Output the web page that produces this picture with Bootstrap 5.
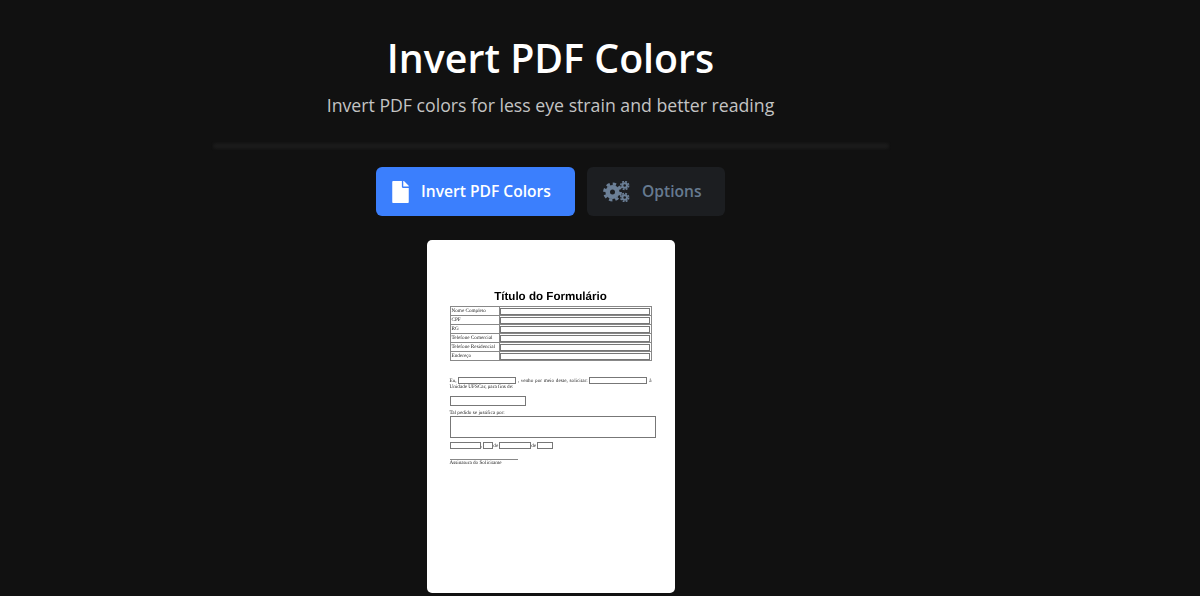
<!DOCTYPE html>
<html lang="en">

<head>
    <meta charset="UTF-8">
    <meta name="viewport" content="width=device-width, initial-scale=1.0">
    <title>Invert PDF Colors</title>
    <link href="https://cdn.jsdelivr.net/npm/bootstrap@5.3.0/dist/css/bootstrap.min.css" rel="stylesheet">
    <style>
        body {
            background-color: #111111;
            font-family: "Open Sans", "Noto Sans", sans-serif;
            height: 596px;
            overflow: hidden;
        }

        .tool-main {
            width: 1101px;
        }

        .tool-head {
            padding-top: 32px;
        }

        .tool-title {
            font-size: 39.3px;
            font-weight: 600;
            line-height: 52px;
            color: #fff;
            margin: 0;
        }

        .tool-sub {
            font-size: 17.7px;
            line-height: 25px;
            color: #c4c4c4;
            margin: 9px 0 0;
        }

        .tool-rule {
            width: 676px;
            height: 6px;
            margin: 25px auto 18px;
            background: #1a1a1a;
            border-radius: 3px;
            filter: blur(1px);
        }

        .act-btn {
            height: 49px;
            border: 0;
            border-radius: 6px;
            font-size: 15.6px;
            font-weight: 600;
            display: flex;
            align-items: center;
            padding: 0;
        }

        .act-blue {
            width: 199px;
            padding-left: 16px;
            gap: 12px;
            background: #3b7ffd;
            color: #fff;
        }

        .act-blue:hover {
            background: #3b7ffd;
            color: #fff;
        }

        .act-dark {
            width: 138px;
            padding-left: 16px;
            gap: 12px;
            background: #1c1e21;
            color: #667a90;
        }

        .act-dark:hover {
            background: #1c1e21;
            color: #667a90;
        }

        .doc-page {
            width: 248px;
            height: 353px;
            margin: 24px auto 0;
            background: #fff;
            border-radius: 5px;
            padding: 50px 23px 0;
            color: #222;
            font-family: "Liberation Serif", serif;
            font-size: 5.2px;
            line-height: 6px;
            text-rendering: geometricPrecision;
            filter: blur(.35px);
        }

        .doc-title {
            font-family: "Liberation Sans", sans-serif;
            font-size: 11.6px;
            font-weight: 700;
            line-height: 13px;
            color: #000;
            text-align: center;
            margin-bottom: 3px;
        }

        .doc-table {
            width: 202px;
            border-collapse: collapse;
            table-layout: fixed;
        }

        .doc-table td {
            border: 1px solid #888;
            height: 9px;
            padding: 0 1px;
        }

        .doc-table td:first-child {
            width: 49px;
        }

        .doc-table td:last-child {
            padding-left: 0;
        }

        .doc-field {
            display: block;
            height: 7px;
            border: 1px solid #777;
        }

        .doc-box {
            display: inline-block;
            height: 7px;
            border: 1px solid #777;
            vertical-align: bottom;
            flex: none;
        }

        .doc-line {
            display: flex;
            justify-content: space-between;
            align-items: flex-end;
            width: 202px;
            margin-top: 16px;
        }

        .doc-box-wide {
            display: block;
            width: 76px;
            height: 10px;
            margin-top: 6px;
            border: 1px solid #777;
        }

        .doc-why {
            margin-top: 4px;
        }

        .doc-area {
            display: block;
            width: 206px;
            height: 22px;
            border: 1px solid #777;
        }

        .doc-date {
            display: flex;
            align-items: flex-end;
            gap: .5px;
            margin-top: 4px;
        }

        .doc-sign {
            width: 68px;
            border-top: 1px solid #888;
            margin-top: 10px;
            white-space: nowrap;
        }
    </style>
</head>

<body>
    <div class="tool-main">
        <div class="tool-head text-center">
            <h1 class="tool-title">Invert PDF Colors</h1>
            <p class="tool-sub">Invert PDF colors for less eye strain and better reading</p>
        </div>

        <div class="tool-rule"></div>

        <div class="d-flex justify-content-center gap-2">
            <button class="btn act-btn act-blue me-1" type="button">
                <svg width="17" height="22" viewBox="0 0 384 512" fill="#fff">
                    <path d="M224 136V0H24C10.700 0 0 10.700 0 24v464c0 13.300 10.700 24 24 24h336c13.300 0 24-10.700 24-24V160H248c-13.200 0-24-10.800-24-24zm160-14.100v6.100H256V0h6.100c6.400 0 12.500 2.500 17 7l97.900 98c4.500 4.500 7 10.600 7 16.900z"/>
                </svg>
                Invert PDF Colors
            </button>
            <button class="btn act-btn act-dark" type="button">
                <!-- gears: a ring plus a dashed ring for the teeth -->
                <svg width="27" height="21" viewBox="0 0 27 21" fill="none" stroke="#6b7f96">
                    <circle cx="9.500" cy="11" r="4.800" stroke-width="4.600"/>
                    <circle cx="9.500" cy="11" r="8" stroke-width="2.800" stroke-dasharray="3.400 2.880"/>
                    <circle cx="21.700" cy="4.500" r="2.300" stroke-width="2"/>
                    <circle cx="21.700" cy="4.500" r="3.900" stroke-width="1.600" stroke-dasharray="1.900 1.160"/>
                    <circle cx="21.700" cy="16.500" r="2.300" stroke-width="2"/>
                    <circle cx="21.700" cy="16.500" r="3.900" stroke-width="1.600" stroke-dasharray="1.900 1.160"/>
                </svg>
                Options
            </button>
        </div>

        <div class="doc-page">
            <div class="doc-title">Título do Formulário</div>
            <table class="doc-table">
                <tr><td>Nome Completo</td><td><span class="doc-field"></span></td></tr>
                <tr><td>CPF</td><td><span class="doc-field"></span></td></tr>
                <tr><td>RG</td><td><span class="doc-field"></span></td></tr>
                <tr><td>Telefone Comercial</td><td><span class="doc-field"></span></td></tr>
                <tr><td>Telefone Residencial</td><td><span class="doc-field"></span></td></tr>
                <tr><td>Endereço</td><td><span class="doc-field"></span></td></tr>
            </table>

            <div class="doc-line">
                <span>Eu,</span>
                <span class="doc-box" style="width: 58px"></span>
                <span>, venho</span><span>por</span><span>meio</span><span>deste,</span><span>solicitar:</span>
                <span class="doc-box" style="width: 58px"></span>
                <span>à</span>
            </div>
            <div>Unidade UFSCar, para fins de:</div>
            <span class="doc-box-wide"></span>
            <div class="doc-why">Tal pedido se justifica por:</div>
            <span class="doc-area"></span>
            <div class="doc-date">
                <span class="doc-box" style="width: 31px"></span><span>,</span>
                <span class="doc-box" style="width: 10px"></span><span>de</span>
                <span class="doc-box" style="width: 32px"></span><span>de</span>
                <span class="doc-box" style="width: 16px"></span>
            </div>
            <div class="doc-sign">Assinatura do Solicitante</div>
        </div>
    </div>

    <script src="https://cdn.jsdelivr.net/npm/bootstrap@5.3.0/dist/js/bootstrap.bundle.min.js"></script>
</body>

</html>
